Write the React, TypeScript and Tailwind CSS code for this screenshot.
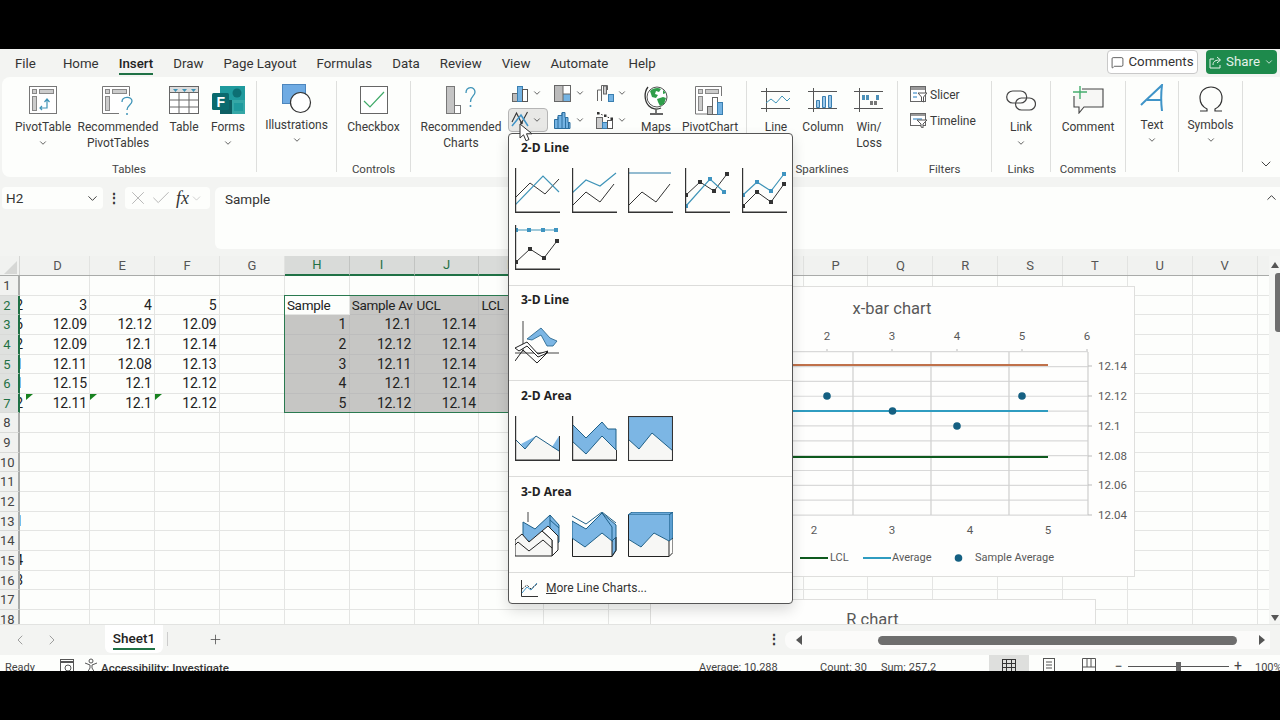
import { ReactNode } from 'react';
import { ChevronDown, ChevronUp, ChevronLeft, ChevronRight, Plus, X, Check, MessageSquare } from 'lucide-react';

const BLUE = '#3f94b8';
const DARK = '#333333';

const menuTabs = ['Home', 'Insert', 'Draw', 'Page Layout', 'Formulas', 'Data', 'Review', 'View', 'Automate', 'Help'];
const columns = ['D', 'E', 'F', 'G', 'H', 'I', 'J', 'K', 'L', 'M', 'N', 'O', 'P', 'Q', 'R', 'S', 'T', 'U', 'V', ''];
const rowNumbers = Array.from({ length: 18 }, (_, i) => i + 1);

// index 0 is the clipped column C
const cellData: Record<number, string[]> = {
  2: ['2', '3', '4', '5', '', 'Sample', 'Sample Av', 'UCL', 'LCL'],
  3: ['6', '12.09', '12.12', '12.09', '', '1', '12.1', '12.14'],
  4: ['2', '12.09', '12.1', '12.14', '', '2', '12.12', '12.14'],
  5: ['1', '12.11', '12.08', '12.13', '', '3', '12.11', '12.14'],
  6: ['1', '12.15', '12.1', '12.12', '', '4', '12.1', '12.14'],
  7: ['2', '12.11', '12.1', '12.12', '', '5', '12.12', '12.14'],
  13: ['1'],
  15: ['4'],
  16: ['3'],
};

function Chevron({ className = '' }: { className?: string }) {
  return <ChevronDown size={10} strokeWidth={2} className={`text-[#444] ${className}`} />;
}

function PivotTableIcon() {
  return (
    <svg width="28" height="28" viewBox="0 0 28 28">
      <rect x="0.5" y="0.5" width="27" height="27" fill="#fff" stroke="#777" />
      <rect x="3.5" y="3.5" width="4" height="4" fill="#ccc" stroke="#888" />
      <rect x="10.5" y="3.5" width="14" height="4" fill="#ccc" stroke="#888" />
      <rect x="3.5" y="10.5" width="4" height="14" fill="#ccc" stroke="#888" />
      <path d="M11 22h7v-8M15.5 16l2.5-3 2.5 3M13 20l-2 2 2 2" fill="none" stroke={BLUE} strokeWidth="1.2" />
    </svg>
  );
}

function RecommendedPivotIcon() {
  return (
    <svg width="32" height="31" viewBox="0 0 32 31">
      <path d="M17 27.500H.5V.5h27V10" fill="#fff" stroke="#777" />
      <rect x="3.5" y="3.5" width="4" height="4" fill="#ccc" stroke="#888" />
      <rect x="10.5" y="3.500" width="14" height="4" fill="#ccc" stroke="#888" />
      <rect x="3.5" y="10.5" width="4" height="14" fill="#ccc" stroke="#888" />
      <path d="M20 16c0-6 10-6 10-1 0 4-5 4-5 9" fill="none" stroke={BLUE} strokeWidth="1.300" />
      <circle cx="25" cy="28" r="1" fill={BLUE} />
    </svg>
  );
}

function TableIcon() {
  return (
    <svg width="30" height="28" viewBox="0 0 30 28">
      <rect x="0.5" y="0.5" width="29" height="27" fill="#fff" stroke="#666" />
      <rect x="0.5" y="0.5" width="29" height="6" fill="#ddd" stroke="#666" />
      <path d="M4 3h5l-2.500 3zM13 3h5l-2.500 3zM22 3h5l-2.500 3z" fill={BLUE} />
      <path d="M10 7v20M20 7v20M1 14h28M1 21h28" stroke="#666" />
    </svg>
  );
}

function FormsIcon() {
  return (
    <svg width="33" height="28" viewBox="0 0 33 28">
      <rect x="8" y="0" width="25" height="14" fill="#1f9a9d" />
      <circle cx="25" cy="7" r="4.500" fill="#0d6f73" />
      <rect x="8" y="14" width="12" height="14" fill="#0d5f63" />
      <rect x="20" y="14" width="13" height="14" fill="#35a7a6" />
      <rect x="22" y="17" width="9" height="8" fill="#1f9a9d" />
      <rect x="0" y="7" width="17" height="17" rx="1.500" fill="#0a6a6e" />
      <text x="4.500" y="21" fontSize="14" fontWeight="700" fill="#fff" fontFamily="Liberation Sans, sans-serif">F</text>
    </svg>
  );
}

function IllustrationsIcon() {
  return (
    <svg width="30" height="30" viewBox="0 0 30 30">
      <rect x="0.5" y="0.5" width="23" height="19" fill="#6fabe3" stroke="#4d86bd" />
      <circle cx="18.500" cy="18.500" r="10" fill="#fff" stroke="#333" strokeWidth="1.200" />
    </svg>
  );
}

function CheckboxIcon() {
  return (
    <svg width="28" height="28" viewBox="0 0 28 28">
      <rect x="0.5" y="0.5" width="27" height="27" fill="#fff" stroke="#666" />
      <path d="M4 15l6 6L24 6" fill="none" stroke="#3fa968" strokeWidth="1.200" />
    </svg>
  );
}

function RecommendedChartIcon() {
  return (
    <svg width="30" height="28" viewBox="0 0 30 28">
      <rect x="0.5" y="0.5" width="8" height="27" fill="#c4c4c4" stroke="#777" />
      <rect x="8.5" y="19.500" width="6" height="8" fill="#fff" stroke="#777" />
      <path d="M20 7c0-7 9-7 9-1 0 4-4.500 4-4.500 10" fill="none" stroke={BLUE} strokeWidth="1.300" />
      <circle cx="24.500" cy="20" r="1" fill={BLUE} />
    </svg>
  );
}

function SmallColumnIcon() {
  return (
    <svg width="17" height="17" viewBox="0 0 17 17">
      <rect x="0.5" y="8.500" width="5" height="8" fill="#bbb" stroke="#666" />
      <rect x="5.5" y="1.500" width="5" height="15" fill="#74b3e3" stroke="#3a7fb0" />
      <rect x="10.5" y="4.500" width="5" height="12" fill="#fff" stroke="#555" />
    </svg>
  );
}

function SmallTreemapIcon() {
  return (
    <svg width="17" height="17" viewBox="0 0 17 17">
      <rect x="0.5" y="0.5" width="16" height="16" fill="#fff" stroke="#666" />
      <rect x="1" y="1" width="8" height="15" fill="#bbb" />
      <rect x="9" y="9" width="7" height="7" fill="#74b3e3" />
      <path d="M9 1v15M9 9h8" stroke="#666" />
    </svg>
  );
}

function SmallWaterfallIcon() {
  return (
    <svg width="17" height="17" viewBox="0 0 17 17">
      <path d="M.5 16V5h4v11M4.500 5V.5h6V5" fill="none" stroke="#666" />
      <rect x="6.500" y="1" width="3" height="8" fill="#ccc" stroke="#666" />
      <rect x="11.500" y="9.500" width="5" height="7" fill="#74b3e3" stroke="#3a7fb0" />
    </svg>
  );
}

function SmallLineIcon() {
  return (
    <svg width="18" height="18" viewBox="0 0 18 18">
      <path d="M1 11L5.500 2l5 10 6-11" fill="none" stroke={DARK} strokeWidth="1.100" />
      <path d="M1 15l9-11 7 11" fill="none" stroke="#3f94c8" strokeWidth="1.500" />
      <circle cx="10.500" cy="12" r="1.300" fill={DARK} />
    </svg>
  );
}

function SmallStatIcon() {
  return (
    <svg width="17" height="17" viewBox="0 0 17 17">
      <path d="M.5 16.500v-9h3.500v-4h4V.5h3v5h3v5h2v6z" fill="#74b3e3" stroke="#2c6f9f" />
      <path d="M4 16V5M8 16V1M11.500 16V6M14.500 16v-6" stroke="#2c6f9f" />
    </svg>
  );
}

function SmallComboIcon() {
  return (
    <svg width="18" height="18" viewBox="0 0 18 18">
      <rect x="0.5" y="6.500" width="6" height="11" fill="#ccc" stroke="#666" />
      <rect x="6.500" y="11.500" width="5" height="6" fill="#74b3e3" stroke="#3a7fb0" />
      <rect x="11.500" y="9.500" width="5" height="8" fill="#fff" stroke="#555" />
      <path d="M2 2l7 3 7 3" fill="none" stroke={DARK} strokeDasharray="1.500 2" />
      <rect x="1" y="1" width="2.500" height="2.500" fill={DARK} />
      <rect x="8" y="3.500" width="2.500" height="2.500" fill={DARK} />
      <rect x="14.500" y="6.500" width="2.500" height="2.500" fill={DARK} />
    </svg>
  );
}

function MapsIcon() {
  return (
    <svg width="26" height="29" viewBox="0 0 26 29">
      <circle cx="14" cy="11" r="10" fill="#fff" stroke="#555" />
      <path d="M7 5c3-3 8-4 11-2l-2 3-3-1-1 3 3 1-2 3-4-1-1-3zM14 13l6-2 3 1-2 6-4 2-2-4zM20 4l3 3-3 1z" fill="#2f9e4a" />
      <path d="M5 1C1 6 1 15 6 20c3 3 8 4 12 2M13 24v3M7 28h13" fill="none" stroke="#333" strokeWidth="1.300" />
    </svg>
  );
}

function PivotChartIcon() {
  return (
    <svg width="30" height="29" viewBox="0 0 30 29">
      <path d="M12 28H.5V.5h26V10" fill="#fff" stroke="#777" />
      <rect x="3.500" y="3.500" width="4" height="4" fill="#ccc" stroke="#888" />
      <rect x="10.500" y="3.500" width="13" height="4" fill="#ccc" stroke="#888" />
      <rect x="3.500" y="10.500" width="4" height="14" fill="#ccc" stroke="#888" />
      <rect x="12.500" y="20.500" width="5" height="8" fill="#bbb" stroke="#666" />
      <rect x="17.500" y="11.500" width="5" height="17" fill="#fff" stroke="#666" />
      <rect x="22.500" y="16.500" width="5" height="12" fill="#74b3e3" stroke="#3a7fb0" />
    </svg>
  );
}

function SparkFrame({ children }: { children: ReactNode }) {
  return (
    <svg width="30" height="24" viewBox="0 0 30 24" className="mt-[2px]">
      <path d="M0 3.500h29M0 20.500h29M5.500 0v24" stroke="#555" />
      {children}
    </svg>
  );
}

function LinkIcon() {
  return (
    <svg width="30" height="22" viewBox="0 0 30 22" className="mt-[4px]">
      <rect x="0.7" y="1" width="20" height="12" rx="6" fill="none" stroke="#444" strokeWidth="1.200" />
      <rect x="9.5" y="8" width="20" height="12" rx="6" fill="none" stroke="#444" strokeWidth="1.200" />
    </svg>
  );
}

function CommentIcon() {
  return (
    <svg width="32" height="28" viewBox="0 0 32 28">
      <path d="M10 3h21v18H12l-5 6v-6H2V10" fill="#f7f7f5" stroke="#444" strokeWidth="1.100" />
      <path d="M8 0v13M1 6h14" stroke="#45ad6e" strokeWidth="1.400" />
    </svg>
  );
}

function TextIcon() {
  return (
    <svg width="24" height="28" viewBox="0 0 24 28">
      <path d="M1 21C8 14 15 8 22 1c-1 8-1 18 0 26M7 16h15" fill="none" stroke="#3f94c8" strokeWidth="2" />
    </svg>
  );
}

function OmegaIcon() {
  return (
    <svg width="26" height="26" viewBox="0 0 26 26" className="mt-[2px]">
      <path d="M2 25h7v-2C5 21 2 17 2 12 2 5 7 1 13 1s11 4 11 11c0 5-3 9-7 11v2h7" fill="none" stroke="#333" strokeWidth="1.200" />
    </svg>
  );
}

function SlicerIcon() {
  return (
    <svg width="17" height="17" viewBox="0 0 17 17">
      <rect x="0.5" y="0.5" width="15" height="15" fill="#fff" stroke="#666" />
      <rect x="1" y="1" width="14" height="3" fill="#999" />
      <path d="M3 6h4v2H3zM3 10h4v2H3z" fill="#8fbde0" />
      <path d="M8 7h9l-3.500 4v5l-2-1v-4z" fill="#fff" stroke="#555" />
    </svg>
  );
}

function TimelineIcon() {
  return (
    <svg width="17" height="15" viewBox="0 0 17 15">
      <rect x="0.5" y="0.5" width="15" height="12" fill="#fff" stroke="#666" />
      <rect x="1" y="1" width="14" height="2" fill="#999" />
      <path d="M3 5h9v2H3z" fill="#8fbde0" />
      <path d="M7 7h10l-4 4v4l-2-1v-3z" fill="#fff" stroke="#555" />
    </svg>
  );
}

function RibbonButton(props: {
  label: string;
  second?: string;
  chevron?: boolean;
  icon: ReactNode;
  className: string;
  tight?: boolean;
}) {
  const { label, second, chevron, icon, className, tight } = props;
  return (
    <div className={`flex flex-col items-center text-center ${className}`}>
      <div className={`flex items-start justify-center ${tight ? 'h-[31px] pt-[3px]' : 'h-[33px] pt-[5px]'}`}>{icon}</div>
      <div className="mt-[5px] whitespace-nowrap leading-[16px]">{label}</div>
      {second ? <div className="leading-[16px] whitespace-nowrap">{second}</div> : null}
      {chevron ? (
        <div className={`flex items-center ${tight ? 'h-[14px]' : 'h-[16px]'}`}>
          <Chevron />
        </div>
      ) : null}
    </div>
  );
}

function RibbonGroup(props: { label?: string; className: string; children: ReactNode }) {
  const { label, className, children } = props;
  return (
    <div className={`mt-[4px] flex h-[91px] shrink-0 flex-col border-r border-[#dedfdd] ${className}`}>
      <div className="flex flex-1">{children}</div>
      <div className="-mb-[5px] text-center text-[11.500px] leading-[16px] text-[#444]">{label}</div>
    </div>
  );
}

function SmallChartButton({ icon, active }: { icon: ReactNode; active?: boolean }) {
  return (
    <div
      className={`flex h-[24px] w-[40px] items-center gap-[3px] rounded-[4px] border pl-[2px] ${
        active ? 'border-[#b5b5b5] bg-[#e8e8e6]' : 'border-transparent'
      }`}
    >
      <div className="flex w-[18px] justify-center">{icon}</div>
      <Chevron />
    </div>
  );
}

function Ribbon() {
  return (
    <div className="ml-[2px] flex h-[100px] rounded-tl-[8px] rounded-bl-[8px] bg-[#fdfefc] font-['Roboto',sans-serif] text-[12px] text-[#3a3a3a]">
      <RibbonGroup label="Tables" className="w-[255px]">
        <div className="flex pl-[6px]">
          <RibbonButton className="w-[70px]" label="PivotTable" chevron icon={<PivotTableIcon />} />
          <RibbonButton className="w-[80px]" label="Recommended" second="PivotTables" icon={<RecommendedPivotIcon />} />
          <RibbonButton className="w-[52px]" label="Table" icon={<TableIcon />} />
          <RibbonButton className="w-[36px]" label="Forms" chevron icon={<FormsIcon />} />
        </div>
      </RibbonGroup>
      <RibbonGroup className="w-[80px]">
        <RibbonButton className="w-full" tight label="Illustrations" chevron icon={<IllustrationsIcon />} />
      </RibbonGroup>
      <RibbonGroup label="Controls" className="w-[74px]">
        <RibbonButton className="w-full" label="Checkbox" icon={<CheckboxIcon />} />
      </RibbonGroup>
      <RibbonGroup label="Charts" className="w-[336px]">
        <div className="flex pl-[10px]">
          <RibbonButton className="w-[80px]" label="Recommended" second="Charts" icon={<RecommendedChartIcon />} />
          <div className="ml-[7px] grid h-[51px] w-[125px] grid-cols-[42.500px_42.500px_40px] grid-rows-[27px_24px] items-start">
            <SmallChartButton icon={<SmallColumnIcon />} />
            <SmallChartButton icon={<SmallTreemapIcon />} />
            <SmallChartButton icon={<SmallWaterfallIcon />} />
            <SmallChartButton active icon={<SmallLineIcon />} />
            <SmallChartButton icon={<SmallStatIcon />} />
            <SmallChartButton icon={<SmallComboIcon />} />
          </div>
          <RibbonButton className="ml-[1px] w-[44px]" label="Maps" icon={<MapsIcon />} />
          <RibbonButton className="ml-[3px] w-[58px]" label="PivotChart" icon={<PivotChartIcon />} />
        </div>
      </RibbonGroup>
      <RibbonGroup label="Sparklines" className="w-[151px]">
        <div className="flex pl-[6px]">
          <RibbonButton
            className="w-[46px]"
            label="Line"
            icon={
              <SparkFrame>
                <path d="M5 15l5-4 5 4 6-7 5 5 3-3" fill="none" stroke={BLUE} />
              </SparkFrame>
            }
          />
          <RibbonButton
            className="w-[48px]"
            label="Column"
            icon={
              <SparkFrame>
                <path d="M8.500 12.500h3v7h-3zM14.500 8.500h3v11h-3zM20.500 7.500h3v12h-3z" fill="#9cc8ea" stroke="#3a7fb0" />
              </SparkFrame>
            }
          />
          <RibbonButton
            className="w-[44px]"
            label="Win/"
            second="Loss"
            icon={
              <SparkFrame>
                <path d="M8 7h3v5H8zM12 7h3v5h-3zM22 7h3v5h-3z" fill="#4d90b8" />
                <path d="M16 13h3v4h-3zM20 13h3v4h-3z" fill="#777" />
              </SparkFrame>
            }
          />
        </div>
      </RibbonGroup>
      <RibbonGroup label="Filters" className="w-[94px]">
        <div className="flex flex-col pl-[12px] pt-[1px]">
          <div className="flex h-[25px] items-center gap-[3px]">
            <SlicerIcon />
            <span>Slicer</span>
          </div>
          <div className="flex h-[27px] items-center gap-[3px]">
            <TimelineIcon />
            <span>Timeline</span>
          </div>
        </div>
      </RibbonGroup>
      <RibbonGroup label="Links" className="w-[59px]">
        <RibbonButton className="w-full" label="Link" chevron icon={<LinkIcon />} />
      </RibbonGroup>
      <RibbonGroup label="Comments" className="w-[75px]">
        <RibbonButton className="w-full" label="Comment" icon={<CommentIcon />} />
      </RibbonGroup>
      <RibbonGroup className="w-[53px]">
        <RibbonButton className="w-full" tight label="Text" chevron icon={<TextIcon />} />
      </RibbonGroup>
      <RibbonGroup className="w-[64px]">
        <RibbonButton className="w-full" tight label="Symbols" chevron icon={<OmegaIcon />} />
      </RibbonGroup>
      <div className="flex flex-1 items-end justify-center pb-[5px] pl-[8px]">
        <ChevronDown size={16} strokeWidth={1.500} className="text-[#444]" />
      </div>
    </div>
  );
}

function MenuBar() {
  return (
    <div className="flex h-[28px] items-start font-['Roboto',sans-serif] text-[13.300px] text-[#333]">
      <span className="ml-[15px] mr-[27px] mt-[5px]">File</span>
      <div className="mt-[5px] flex gap-[20px]">
        {menuTabs.map((tab) =>
          tab === 'Insert' ? (
            <span key={tab} className="relative font-medium text-[#222]">
              {tab}
              <span className="absolute bottom-[-1px] left-0 right-0 h-[2px] bg-[#1f7145]" />
            </span>
          ) : (
            <span key={tab}>{tab}</span>
          ),
        )}
      </div>
      <div className="ml-auto mr-[3px] mt-[1px] flex items-center gap-[8px]">
        <div className="flex h-[24px] w-[91px] items-center justify-center gap-[4px] rounded-[4px] border border-[#c9c9c9] bg-white">
          <MessageSquare size={13} strokeWidth={1.400} />
          <span>Comments</span>
        </div>
        <div className="flex h-[24px] w-[71px] items-center justify-center gap-[4px] rounded-[4px] bg-[#1e8a4c] text-[#e6f2ea]">
          <svg width="13" height="13" viewBox="0 0 13 13" fill="none" stroke="#e6f2ea">
            <path d="M5 3H1v9h10V9M4 9c0-4 3-5 7-5M8 1l3.500 3L8 7" />
          </svg>
          <span>Share</span>
          <ChevronDown size={10} strokeWidth={2} />
        </div>
      </div>
    </div>
  );
}

function FormulaBar() {
  return (
    <div className="flex h-[62px] items-start pl-[2px] font-['Roboto',sans-serif] text-[13.500px] text-[#333]">
      <div className="flex h-[22px] w-[101px] items-center justify-between rounded-[4px] bg-[#fdfefc] pl-[4px] pr-[3px]">
        <span>H2</span>
        <ChevronDown size={15} strokeWidth={1.500} />
      </div>
      <div className="flex h-[22px] w-[22px] items-center justify-center font-bold">⋮</div>
      <div className="flex h-[22px] w-[85px] items-center rounded-[4px] bg-[#fdfefc] pl-[2px] text-[#aaa]">
        <X size={22} strokeWidth={0.900} />
        <Check size={22} strokeWidth={0.900} className="ml-[1px]" />
        <span className="ml-[4px] font-['Liberation_Serif',serif] text-[18px] italic leading-none text-[#333]">fx</span>
        <ChevronDown size={13} strokeWidth={1} className="ml-[1px]" />
      </div>
      <div className="ml-[5px] flex h-[62px] flex-1 items-start justify-between rounded-l-[6px] bg-[#fdfefc] pl-[10px] pr-[1px] pt-[2px]">
        <span>Sample</span>
        <ChevronUp size={15} strokeWidth={1.500} className="mt-[1px]" />
      </div>
    </div>
  );
}

function ColumnHeaders() {
  return (
    <div className="flex h-[20px] border-b border-[#a9aba9] bg-[#f1f2f0] font-['Roboto',sans-serif] text-[13px] text-[#555]">
      <div className="relative w-[20px] shrink-0 border-r border-[#d5d6d4]">
        <div className="absolute bottom-[1px] right-[2px] h-0 w-0 border-b-[13px] border-l-[13px] border-b-[#d6d7d5] border-l-transparent" />
      </div>
      <div className="w-[5.500px] shrink-0" />
      {columns.map((col, i) => {
        const selected = col === 'H' || col === 'I' || col === 'J' || col === 'K';
        return (
          <div
            key={i}
            className={`flex shrink-0 items-center justify-center border-r ${
              col ? 'w-[64.850px]' : 'w-[12px]'
            } ${
              selected
                ? '-mb-[1px] border-b-2 border-r-[#c2c4c2] border-b-[#1f7145] bg-[#d9dbd9] text-[#1f7145]'
                : 'border-r-[#e2e3e1]'
            }`}
          >
            {col}
          </div>
        );
      })}
    </div>
  );
}

function GridRow({ row }: { row: number }) {
  const data = cellData[row] || [];
  const headerSelected = row >= 2 && row <= 7;
  return (
    <div className="flex h-[19.650px] font-['Roboto',sans-serif] text-[14px] tracking-[-0.2px] text-[#222]">
      <div
        className={`flex w-[20px] shrink-0 border-b border-r-2 border-b-[#d9dad8] text-[13px] tracking-normal ${
          headerSelected ? 'border-r-[#1f7145] bg-[#dfe1df] text-[#1f7145]' : 'border-r-[#a9aba9] bg-[#f1f2f0] text-[#444]'
        }`}
      >
        <span className="w-[14px] text-center leading-[19px]">{row}</span>
      </div>
      <div className="flex w-[5.500px] shrink-0 justify-end overflow-hidden border-b border-[#e4e5e3] pr-[2.500px] leading-[19px]">
        <span className="shrink-0">{data[0]}</span>
      </div>
      {columns.map((col, i) => {
        const value = data[i + 1] || '';
        const inRange = row >= 2 && row <= 7 && i >= 4 && i <= 7;
        const isActive = row === 2 && i === 4;
        const isText = row === 2 && i >= 4;
        const flagged = row === 7 && i <= 2;
        return (
          <div
            key={i}
            className={`relative shrink-0 overflow-hidden whitespace-nowrap border-b border-r leading-[19px] ${
              col ? 'w-[64.850px]' : 'w-[12px]'
            } ${isText ? 'pl-[2px] text-left text-[13.500px] tracking-[-0.3px]' : 'px-[2.500px] text-right'} ${
              inRange && !isActive ? 'border-[#bdbdbd] bg-[#c6c6c4]' : 'border-[#e4e5e3] bg-[#fdfefc]'
            }`}
          >
            {flagged ? (
              <span className="absolute left-0 top-0 h-0 w-0 border-r-[7px] border-t-[6px] border-r-transparent border-t-[#17821f]" />
            ) : null}
            {value}
          </div>
        );
      })}
    </div>
  );
}

function XBarChart() {
  const grid = Array.from({ length: 12 }, (_, i) => 351.700 + i * 14.850);
  const rightLabels = [
    ['12.14', 366],
    ['12.12', 396],
    ['12.1', 426],
    ['12.08', 456],
    ['12.06', 485],
    ['12.04', 515],
  ] as const;
  const labelProps = { fontFamily: 'Roboto, sans-serif', fontSize: 11.500, fill: '#595959' };
  return (
    <div className="absolute left-[650px] top-[30px] h-[291px] w-[485px] border border-[#dfdfdd] bg-[#fefefd]">
      <svg width="483" height="289" viewBox="651 287 483 289" className="block">
        <text x="892" y="314" textAnchor="middle" fontFamily="Roboto, sans-serif" fontSize="16.500" fill="#595959">
          x-bar chart
        </text>
        {[2, 3, 4, 5, 6].map((n, i) => (
          <g key={n}>
            <text x={827 + i * 65} y="340" textAnchor="middle" {...labelProps}>
              {n}
            </text>
            <path d={`M${827 + i * 65} 349v3`} stroke="#bbb" />
          </g>
        ))}
        {grid.map((y) => (
          <path key={y} d={`M650 ${y}H1088`} stroke="#d9d9d9" strokeWidth="1.200" />
        ))}
        {[853, 931, 1009, 1088].map((x) => (
          <path key={x} d={`M${x} 352V515`} stroke="#d2d2d2" strokeWidth="1.300" />
        ))}
        {rightLabels.map(([label, y]) => (
          <g key={label}>
            <path d={`M1088 ${y}h4`} stroke="#bbb" />
            <text x="1098" y={y + 4} {...labelProps}>
              {label}
            </text>
          </g>
        ))}
        <path d="M650 365H1048" stroke="#c0714a" strokeWidth="2" />
        <path d="M650 411H1048" stroke="#2f9cc0" strokeWidth="2" />
        <path d="M650 457H1048" stroke="#0e5a1e" strokeWidth="2" />
        {[
          [827, 396],
          [892.500, 411],
          [957, 426],
          [1022, 396],
        ].map(([x, y]) => (
          <circle key={x} cx={x} cy={y} r="3.800" fill="#156082" />
        ))}
        {[
          [814, '2'],
          [892, '3'],
          [970, '4'],
          [1048, '5'],
        ].map(([x, label]) => (
          <text key={label} x={x} y="534" textAnchor="middle" {...labelProps}>
            {label}
          </text>
        ))}
        <path d="M800 558h28" stroke="#0e5a1e" strokeWidth="2" />
        <text x="830" y="561" {...labelProps} fontSize="11">LCL</text>
        <path d="M863 558h28" stroke="#2f9cc0" strokeWidth="2" />
        <text x="892" y="561" {...labelProps} fontSize="11">Average</text>
        <circle cx="958.500" cy="558" r="3.800" fill="#156082" />
        <text x="975" y="561" {...labelProps} fontSize="11">Sample Average</text>
      </svg>
    </div>
  );
}

function RChart() {
  return (
    <div className="absolute left-[650px] top-[343px] flex h-[80px] w-[446px] justify-center border border-[#dfdfdd] bg-[#fefefd] pt-[8px] font-['Roboto',sans-serif] text-[16.500px] text-[#595959]">
      <span className="ml-[-1px]">R chart</span>
    </div>
  );
}

function Sheet() {
  return (
    <div className="relative flex h-[368px] overflow-hidden bg-[#fdfefc]">
      <div className="relative w-[1269px] shrink-0 overflow-hidden">
        <div className="w-[1300px]">
          <ColumnHeaders />
          {rowNumbers.map((row) => (
            <GridRow key={row} row={row} />
          ))}
        </div>
        {/* selection outline */}
        <div className="pointer-events-none absolute left-[284px] top-[39px] h-[118px] w-[261px] border-[1.500px] border-[#2a7a50]" />
        <XBarChart />
        <RChart />
      </div>
      <div className="relative flex w-[11px] shrink-0 flex-col items-end bg-[#f4f5f3] pt-[6px]">
        <span className="mr-[1px] h-0 w-0 border-x-[4px] border-b-[6px] border-x-transparent border-b-[#555]" />
        <span className="mt-[5px] h-[59px] w-[5px] rounded-l-[3px] bg-[#6e6e6e]" />
        <span className="mr-[1px] mt-auto mb-[3px] h-0 w-0 border-x-[4px] border-t-[6px] border-x-transparent border-t-[#555]" />
      </div>
    </div>
  );
}

function SheetTabs() {
  return (
    <div className="flex h-[31px] items-start border-t border-[#e2e3e1] bg-[#f3f4f2] text-[#888]">
      <div className="flex h-[29px] w-[105px] items-center pl-[12px]">
        <ChevronLeft size={16} strokeWidth={1.200} />
        <ChevronRight size={16} strokeWidth={1.200} className="ml-[16px]" />
      </div>
      <div className="relative flex h-[28px] w-[58px] justify-center rounded-b-[6px] bg-white pt-[3px] font-['Roboto',sans-serif] text-[13.500px] font-medium text-[#222]">
        Sheet1
        <span className="absolute bottom-[3px] left-[8px] right-[8px] h-[2px] bg-[#1f7145]" />
      </div>
      <div className="ml-[4px] mt-[7px] h-[14px] w-px bg-[#ccc]" />
      <Plus size={15} strokeWidth={1.200} className="ml-[40px] mt-[7px] text-[#444]" />
      <div className="ml-[544px] mt-[5px] w-[5px] text-[14px] font-bold leading-[18px] text-[#333]">⋮</div>
      <div className="ml-[13px] mt-[6px] flex h-[18px] w-[485px] items-center rounded-l-[8px] bg-[#fbfbfa] px-[3px]">
        <span className="ml-[8px] h-0 w-0 border-y-[5px] border-r-[6px] border-y-transparent border-r-[#555]" />
        <span className="ml-[76px] h-[9px] w-[359px] rounded-full bg-[#6e6e6e]" />
        <span className="ml-[22px] h-0 w-0 border-y-[5px] border-l-[6px] border-y-transparent border-l-[#555]" />
      </div>
    </div>
  );
}

function StatusBar() {
  return (
    <div className="flex h-[24px] items-start bg-[#fdfefc] font-['Roboto',sans-serif] text-[11px] text-[#444]">
      <div className="flex w-[699px] shrink-0 items-start">
        <span className="ml-[5px] mt-[5px]">Ready</span>
        <svg width="14" height="16" viewBox="0 0 14 16" className="ml-[25px] mt-[4px]">
          <rect x="0.500" y="0.500" width="13" height="13" fill="none" stroke="#555" />
          <path d="M1 3h12" stroke="#555" strokeWidth="2" />
          <circle cx="8" cy="9" r="3" fill="none" stroke="#555" />
        </svg>
        <svg width="14" height="16" viewBox="0 0 14 16" className="ml-[10px] mt-[3px]">
          <circle cx="7" cy="3" r="2" fill="none" stroke="#555" />
          <path d="M1 5l5 2v3l-3 5M13 5L8 7v3l3 5" fill="none" stroke="#555" />
        </svg>
        <span className="ml-[3px] mt-[5px] text-[11.500px] font-medium text-[#333]">Accessibility: Investigate</span>
      </div>
      <span className="mt-[5px] w-[121px] shrink-0 whitespace-nowrap">Average: 10.288</span>
      <span className="mt-[5px] w-[61px] shrink-0 whitespace-nowrap">Count: 30</span>
      <span className="mt-[5px] w-[108px] shrink-0 whitespace-nowrap">Sum: 257.2</span>
      <div className="flex h-[24px] w-[40px] shrink-0 justify-center bg-[#dedfdd] pt-[3px]">
        <svg width="16" height="14" viewBox="0 0 16 14">
          <path d="M1.500 1v13M5.500 1v13M10.500 1v13M14.500 1v13M1 1.500h14M1 5.500h14M1 9.500h14" stroke="#333" />
        </svg>
      </div>
      <div className="flex w-[40px] shrink-0 justify-center pt-[3px]">
        <svg width="14" height="14" viewBox="0 0 14 14">
          <rect x="1.500" y="0.500" width="11" height="13" fill="none" stroke="#555" />
          <path d="M4 4h6M4 7h6M4 10h6" stroke="#555" />
        </svg>
      </div>
      <div className="flex w-[40px] shrink-0 justify-center pt-[3px]">
        <svg width="14" height="14" viewBox="0 0 14 14">
          <path d="M.5 14V.5h13V14M.5 9h13M5 1v8M9 1v8" fill="none" stroke="#555" />
        </svg>
      </div>
      <span className="mt-[1px] w-[19px] shrink-0 text-center text-[14px]">−</span>
      <div className="relative mt-[11px] h-px w-[101px] shrink-0 bg-[#555]">
        <span className="absolute -top-[4px] left-[48px] h-[9px] w-[5px] bg-[#666]" />
      </div>
      <span className="mt-[1px] w-[18px] shrink-0 text-center text-[14px]">+</span>
      <span className="ml-[8px] mt-[5px] whitespace-nowrap">100%</span>
    </div>
  );
}

function ChartIconFrame({ children, frame }: { children: ReactNode; frame?: boolean }) {
  return (
    <svg width="45" height="45" viewBox="0 0 45 45">
      {children}
      <path d={frame ? 'M.5 0V44.500H44.500V0H.5' : 'M.5 0V44.300H45'} fill="none" stroke="#333" strokeWidth="1.400" />
    </svg>
  );
}

function Marker({ x, y, color }: { x: number; y: number; color: string }) {
  return <rect x={x - 2} y={y - 2} width="4" height="4" fill={color} />;
}

const LINE_MARKER = '#3f94c0';
const AREA_FILL = '#7cb6e4';
const AREA_STROKE = '#1f6088';
const AREA_LIGHT = '#f7f7f5';

function LineCharts() {
  const dark = [[0, 38], [14, 24], [28, 34], [42, 16]];
  const toPoints = (pts: number[][]) => pts.map((p) => p.join(',')).join(' ');
  return (
    <div className="flex flex-wrap gap-x-[11.700px] gap-y-[12px]">
      <ChartIconFrame>
        <polyline points="0,30 15,15 30,26 44,11" fill="none" stroke={DARK} />
        <polyline points="0,37 28,8 44,24" fill="none" stroke={BLUE} strokeWidth="1.200" />
      </ChartIconFrame>
      <ChartIconFrame>
        <polyline points="0,25 14,12 28,18 44,5" fill="none" stroke={BLUE} strokeWidth="1.200" />
        <polyline points={toPoints(dark)} fill="none" stroke={DARK} />
      </ChartIconFrame>
      <ChartIconFrame>
        <path d="M1 5H43" stroke="#6fa5c2" strokeWidth="1.600" />
        <polyline points={toPoints(dark)} fill="none" stroke={DARK} />
      </ChartIconFrame>
      <ChartIconFrame>
        <polyline points="1,27 15,14 29,23 42,6" fill="none" stroke={DARK} />
        <polyline points="1,38 25,11 39,24" fill="none" stroke={BLUE} strokeWidth="1.200" />
        {[[1, 27], [15, 14], [29, 23], [42, 6]].map(([x, y]) => <Marker key={x} x={x} y={y} color={DARK} />)}
        {[[1, 38], [25, 11], [39, 24]].map(([x, y]) => <Marker key={x} x={x} y={y} color={LINE_MARKER} />)}
      </ChartIconFrame>
      <ChartIconFrame>
        <polyline points="1,27 15,14 29,23 42,6" fill="none" stroke={BLUE} strokeWidth="1.200" />
        <polyline points="1,38 15,24 29,34 42,16" fill="none" stroke={DARK} />
        {[[1, 27], [15, 14], [29, 23], [42, 6]].map(([x, y]) => <Marker key={x} x={x} y={y} color={LINE_MARKER} />)}
        {[[1, 38], [15, 24], [29, 34], [42, 16]].map(([x, y]) => <Marker key={x} x={x} y={y} color={DARK} />)}
      </ChartIconFrame>
      <ChartIconFrame>
        <path d="M1 5H42" stroke={BLUE} strokeWidth="1.200" />
        <polyline points="1,37 15,24 29,33 42,16" fill="none" stroke={DARK} />
        {[1, 14, 28, 41].map((x) => <Marker key={x} x={x} y={5} color={LINE_MARKER} />)}
        {[[1, 37], [15, 24], [29, 33], [42, 16]].map(([x, y]) => <Marker key={x} x={x} y={y} color={DARK} />)}
      </ChartIconFrame>
    </div>
  );
}

function Line3DIcon() {
  return (
    <svg width="45" height="45" viewBox="0 0 45 45">
      <path d="M8 1V32" stroke="#444" />
      <polygon points="12,19 26,8 35,18 42,21 38,26 32,26 26,15 17,20" fill={AREA_FILL} stroke={AREA_STROKE} strokeWidth="0.800" />
      <path d="M0 33H44" stroke="#444" />
      <polygon points="0,28 12,22 23,34 33,31 30,34 23,37 12,26 4,31" fill="#fff" stroke="#222" />
      <polyline points="0,41 8,30 22,43 33,32" fill="none" stroke="#222" />
    </svg>
  );
}

function AreaCharts() {
  return (
    <div className="flex gap-x-[11.700px]">
      <ChartIconFrame frame={false}>
        <polygon points="0,23 10,33 21,20 44,35 44,44 0,44" fill={AREA_LIGHT} />
        <polygon points="6,28 21,20 10,33" fill={AREA_FILL} />
        <polygon points="37,31 44,20 44,35" fill={AREA_FILL} />
        <polyline points="0,23 10,33 21,20 44,35" fill="none" stroke={AREA_STROKE} />
        <path d="M44.500 20V44" stroke="#333" />
      </ChartIconFrame>
      <ChartIconFrame frame={false}>
        <polygon points="0,25 14,38 30,20 44,34 44,44 0,44" fill={AREA_LIGHT} />
        <polygon points="0,8 14,22 30,6 36,13 44,13 44,34 30,20 14,38 0,25" fill={AREA_FILL} stroke={AREA_STROKE} />
        <path d="M44.500 34V44" stroke="#333" />
      </ChartIconFrame>
      <svg width="45" height="45" viewBox="0 0 45 45">
        <rect x="0.500" y="0.500" width="44" height="44" fill={AREA_LIGHT} />
        <polygon points="0,0 45,0 45,35 24,17 11,33 0,23" fill={AREA_FILL} />
        <polyline points="0,23 11,33 24,17 45,35" fill="none" stroke={AREA_STROKE} />
        <rect x="0.500" y="0.500" width="44" height="44" fill="none" stroke="#333" strokeWidth="1.100" />
      </svg>
    </div>
  );
}

function Area3DCharts() {
  return (
    <div className="flex gap-x-[11.700px]">
      <svg width="45" height="45" viewBox="0 0 45 45">
        <path d="M13 0V10" stroke="#444" />
        <polygon points="8,10 20,17 35,3 44,13 44,30 38,34 8,28" fill={AREA_FILL} stroke={AREA_STROKE} />
        <path d="M35 3v16M35 8l9 8" stroke={AREA_STROKE} fill="none" />
        <polygon points="27,19 33,14 43,24 43,38 37,44 37,28" fill="#fff" stroke="#222" />
        <polygon points="0,28 7,22 14,30 27,19 37,28 37,44 0,44" fill={AREA_LIGHT} stroke="#222" />
        <path d="M0 33l3-3 11 9 14-11 9 8" fill="none" stroke="#222" />
      </svg>
      <svg width="45" height="45" viewBox="0 0 45 45">
        <polygon points="0,9 14,17 30,1 44,13 44,38 40,44 0,44" fill={AREA_FILL} stroke={AREA_STROKE} />
        <path d="M0 4l14 8L30 0l14 11M40 15v15M30 1l10 14" fill="none" stroke={AREA_STROKE} />
        <polygon points="0,26 13,35 30,21 40,29 40,44.500 0,44.500" fill={AREA_LIGHT} />
        <path d="M.5 26V44.500H40V29M40 44.500l4-6V25" fill="none" stroke="#222" />
        <polyline points="0,26 13,35 30,21 40,29 44,25" fill="none" stroke={AREA_STROKE} />
      </svg>
      <svg width="45" height="45" viewBox="0 0 45 45">
        <polygon points="0,3 4,0 45,0 41,3" fill="#6aa8d8" stroke={AREA_STROKE} />
        <polygon points="41,3 45,0 45,26 41,29" fill="#5c9fd2" stroke={AREA_STROKE} />
        <polygon points="0,3 41,3 41,29 26,21 13,35 0,27" fill={AREA_FILL} />
        <polygon points="0,27 13,35 26,21 41,29 41,44.500 0,44.500" fill={AREA_LIGHT} />
        <polyline points="0,27 13,35 26,21 41,29" fill="none" stroke={AREA_STROKE} />
        <path d="M.5 3V44.500H41V29M41 44.500l4-4V26" fill="none" stroke="#222" />
      </svg>
    </div>
  );
}

function MenuSection(props: { title: string; children: ReactNode; className: string; low?: boolean }) {
  const { title, children, className, low } = props;
  return (
    <div className={`border-b border-[#dcdcda] pl-[6px] pr-[2px] ${className}`}>
      <div
        className={`pl-[6px] text-[12px] font-bold leading-[16px] text-[#222] ${
          low ? 'h-[35px] pt-[7px]' : 'h-[34px] pt-[6px]'
        }`}
      >
        {title}
      </div>
      {children}
    </div>
  );
}

function ChartMenu() {
  return (
    <div className="absolute left-[508px] top-[84px] flex h-[471px] w-[285px] flex-col rounded-[4px] border border-[#555] bg-[#fefefc] font-['Open_Sans',sans-serif] shadow-[0_6px_14px_rgba(0,0,0,0.14)]">
      <MenuSection title="2-D Line" className="h-[152px]">
        <LineCharts />
      </MenuSection>
      <MenuSection title="3-D Line" className="h-[95px]">
        <Line3DIcon />
      </MenuSection>
      <MenuSection low title="2-D Area" className="h-[96px]">
        <AreaCharts />
      </MenuSection>
      <MenuSection low title="3-D Area" className="h-[96px]">
        <Area3DCharts />
      </MenuSection>
      <div className="flex flex-1 items-center gap-[8px] pl-[12px] font-['Roboto',sans-serif] text-[12px] text-[#333]">
        <svg width="17" height="17" viewBox="0 0 17 17">
          <path d="M.5 0v16.500H17" fill="none" stroke="#333" />
          <path d="M1 13l5-6 4 3 6-7" fill="none" stroke="#3f94c8" />
          <path d="M1 9l5-4 4 4 6-5" fill="none" stroke="#333" strokeDasharray="2 1.500" />
        </svg>
        <span>
          <span className="underline">M</span>ore Line Charts...
        </span>
      </div>
    </div>
  );
}

function Cursor() {
  return (
    <svg width="15" height="20" viewBox="0 0 15 20" className="absolute left-[519px] top-[74px]">
      <path d="M1 1v14l3.500-3.200 2.500 6 3-1.300-2.500-5.700H13z" fill="#fff" stroke="#333" />
    </svg>
  );
}

export default function App() {
  return (
    <div className="h-[720px] w-[1280px] overflow-hidden bg-black pt-[49px]">
      <div className="relative h-[622px] overflow-hidden bg-[#f3f4f2] font-['Roboto',sans-serif]">
        <MenuBar />
        <Ribbon />
        <div className="h-[10px]" />
        <FormulaBar />
        <div className="h-[7px]" />
        <Sheet />
        <SheetTabs />
        <StatusBar />
        <ChartMenu />
        <Cursor />
      </div>
    </div>
  );
}
